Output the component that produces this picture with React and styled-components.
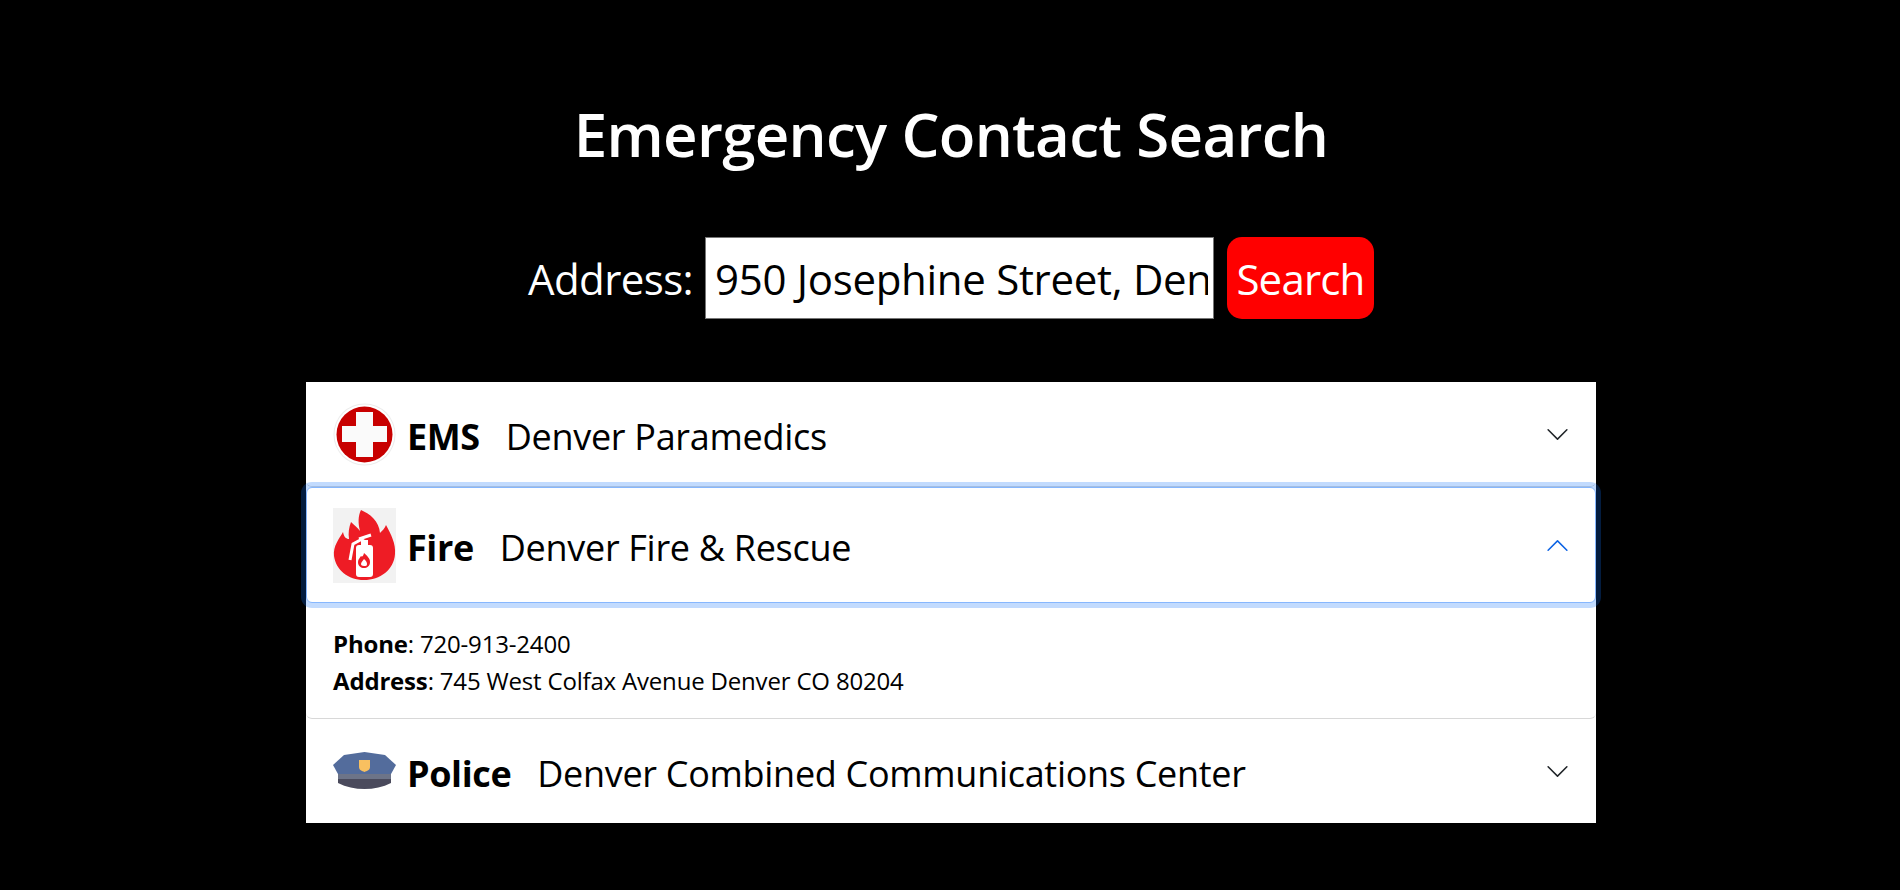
import React from "react";
import styled, { createGlobalStyle } from "styled-components";

const GlobalStyle = createGlobalStyle`
  html, body {
    margin: 0;
    padding: 0;
    background: #000;
  }
  body {
    font-family: "Open Sans", "Noto Sans", sans-serif;
    font-stretch: 90%;
  }
`;

const Page = styled.div`
  min-height: 890px;
  background: #000;
  color: #fff;
  display: flex;
  flex-direction: column;
  align-items: center;
  padding: 98px 0 0 2px;
  box-sizing: border-box;
`;

const Title = styled.h1`
  margin: 0;
  font-size: 60px;
  line-height: 72px;
  font-weight: 600;
  letter-spacing: -0.7px;
`;

const SearchForm = styled.form`
  display: flex;
  align-items: center;
  gap: 12px;
  margin-top: 67px;
`;

const Label = styled.label`
  font-size: 42px;
  letter-spacing: -0.6px;
`;

const AddressInput = styled.input`
  width: 509px;
  height: 82px;
  box-sizing: border-box;
  padding: 0 5px 0 9px;
  border: 1px solid #767676;
  background: #fff;
  color: #000;
  font-family: inherit;
  font-size: 42px;
  font-stretch: 90%;
  letter-spacing: -0.3px;
  outline: none;
`;

const SearchButton = styled.button`
  width: 147px;
  height: 82px;
  margin-left: 1px;
  padding: 0;
  border: none;
  border-radius: 15px;
  background: #f00;
  color: #fff;
  font-family: inherit;
  font-size: 42px;
  font-stretch: 90%;
  letter-spacing: -0.8px;
`;

const Accordion = styled.div`
  width: 1290px;
  margin-top: 63px;
  background: #fff;
  color: #000;
`;

const Item = styled.div`
  background: #fff;
  border-bottom: ${({ $last }) => ($last ? "none" : "1px solid #d8d8d8")};
  border-radius: 6px;
`;

const Header = styled.button`
  position: relative;
  width: 100%;
  height: ${({ $height }) => $height}px;
  box-sizing: border-box;
  display: flex;
  align-items: center;
  gap: 11px;
  padding: 0 25px 0 26px;
  background: #fff;
  color: #000;
  font-family: inherit;
  font-stretch: 90%;
  text-align: left;
  border: 1px solid ${({ $open }) => ($open ? "#86b7fe" : "transparent")};
  border-radius: 6px;
  box-shadow: ${({ $open }) =>
    $open ? "0 0 0 5px rgba(13, 110, 253, 0.25)" : "none"};
  z-index: ${({ $open }) => ($open ? 3 : 1)};
`;

const IconBox = styled.span`
  display: flex;
  flex: none;
  width: 63px;
`;

const Service = styled.span`
  padding-top: 4px;
  font-size: 36px;
  font-weight: 700;
  letter-spacing: -0.4px;
`;

const Provider = styled.span`
  margin-left: 15px;
  padding-top: 4px;
  font-size: 36px;
  letter-spacing: -0.3px;
`;

const Chevron = styled.svg`
  flex: none;
  width: 25px;
  height: 25px;
  margin-left: auto;
  transform: ${({ $open }) => ($open ? "rotate(180deg)" : "none")};
  fill: ${({ $open }) => ($open ? "#0c63e4" : "#212529")};
`;

const Body = styled.div`
  padding: 22px 27px 19px;
  font-size: 24px;
  line-height: 37px;
  letter-spacing: -0.18px;
`;

const DetailLine = styled.div``;

const DetailKey = styled.b`
  font-weight: 700;
`;

function EmsIcon() {
  return (
    <svg width="63" height="63" viewBox="0 0 63 63">
      <circle cx="31.5" cy="31.5" r="31" fill="#ececec" />
      <circle cx="31.5" cy="31.5" r="30" fill="#fff" />
      <circle cx="31.5" cy="31.5" r="28" fill="#c80000" />
      <path d="M23 9h17v14h14v16H40v15H23V39H9V23h14z" fill="#fafafa" />
    </svg>
  );
}

function FireIcon() {
  return (
    <svg width="63" height="75" viewBox="0 0 63 75">
      <rect width="63" height="75" fill="#f2f2f2" />
      <path
        d="M28 2C37 6 46 13 47 25C49 23 52 20 53 17C58 26 63 36 62 46C61 62 47 72 31 72C15 72 3 62 1 48C0 38 6 31 10 24C11 29 13 31 16 31C15 25 16 19 18 14C21 17 25 20 27 23C25 15 25 8 28 2Z"
        fill="#ee1c25"
      />
      <rect x="23" y="37" width="17" height="32" rx="3" fill="#fff" />
      <rect x="28" y="32" width="7" height="6" fill="#fff" />
      <path
        d="M38 27L26 31M31 30L20 36L17 52"
        fill="none"
        stroke="#fff"
        strokeWidth="3"
      />
      <path
        d="M31 45C34 48 37 50 37 54C37 58 34 60 31 60C28 60 25 58 25 54C25 51 27 50 28 48C29 49 30 49 31 45Z"
        fill="#ee1c25"
      />
      <path
        d="M31 51C33 53 34 54 34 56C34 58 33 58 31 58C29 58 28 57 28 56C28 54 30 53 31 51Z"
        fill="#fff"
      />
    </svg>
  );
}

function PoliceIcon() {
  return (
    <svg width="63" height="63" viewBox="0 0 63 63">
      <g transform="translate(0 12)">
        <path d="M0 13L11 3L31.5 0L52 3L63 13L58 22H5Z" fill="#536c9c" />
        <path d="M5 22H58V27H5Z" fill="#6d7488" />
        <path d="M5 27H58V31C50 35 41 37 31.5 37C22 37 13 35 5 31Z" fill="#4a4a5c" />
        <path d="M26 8H37V15C37 18 34 19 31.5 20C29 19 26 18 26 15Z" fill="#f8c060" />
      </g>
    </svg>
  );
}

function ChevronIcon({ open }) {
  return (
    <Chevron viewBox="0 0 16 16" $open={open}>
      <path
        fillRule="evenodd"
        d="M1.646 4.646a.5.5 0 0 1 .708 0L8 10.293l5.646-5.647a.5.5 0 0 1 .708.708l-6 6a.5.5 0 0 1-.708 0l-6-6a.5.5 0 0 1 0-.708z"
      />
    </Chevron>
  );
}

const contacts = [
  { service: "EMS", provider: "Denver Paramedics", icon: <EmsIcon />, height: 104 },
  {
    service: "Fire",
    provider: "Denver Fire & Rescue",
    icon: <FireIcon />,
    height: 116,
    open: true,
    phone: "720-913-2400",
    address: "745 West Colfax Avenue Denver CO 80204",
  },
  {
    service: "Police",
    provider: "Denver Combined Communications Center",
    icon: <PoliceIcon />,
    height: 104,
    last: true,
  },
];

export default function App() {
  return (
    <Page>
      <GlobalStyle />
      <Title>Emergency Contact Search</Title>
      <SearchForm onSubmit={(e) => e.preventDefault()}>
        <Label htmlFor="address">Address:</Label>
        <AddressInput
          id="address"
          type="text"
          readOnly
          value="950 Josephine Street, Denver, CO"
        />
        <SearchButton type="submit">Search</SearchButton>
      </SearchForm>
      <Accordion>
        {contacts.map((c) => (
          <Item key={c.service} $last={c.last}>
            <Header type="button" $open={c.open} $height={c.height}>
              <IconBox>{c.icon}</IconBox>
              <Service>{c.service}</Service>
              <Provider>{c.provider}</Provider>
              <ChevronIcon open={c.open} />
            </Header>
            {c.open && (
              <Body>
                <DetailLine>
                  <DetailKey>Phone</DetailKey>: {c.phone}
                </DetailLine>
                <DetailLine>
                  <DetailKey>Address</DetailKey>: {c.address}
                </DetailLine>
              </Body>
            )}
          </Item>
        ))}
      </Accordion>
    </Page>
  );
}
